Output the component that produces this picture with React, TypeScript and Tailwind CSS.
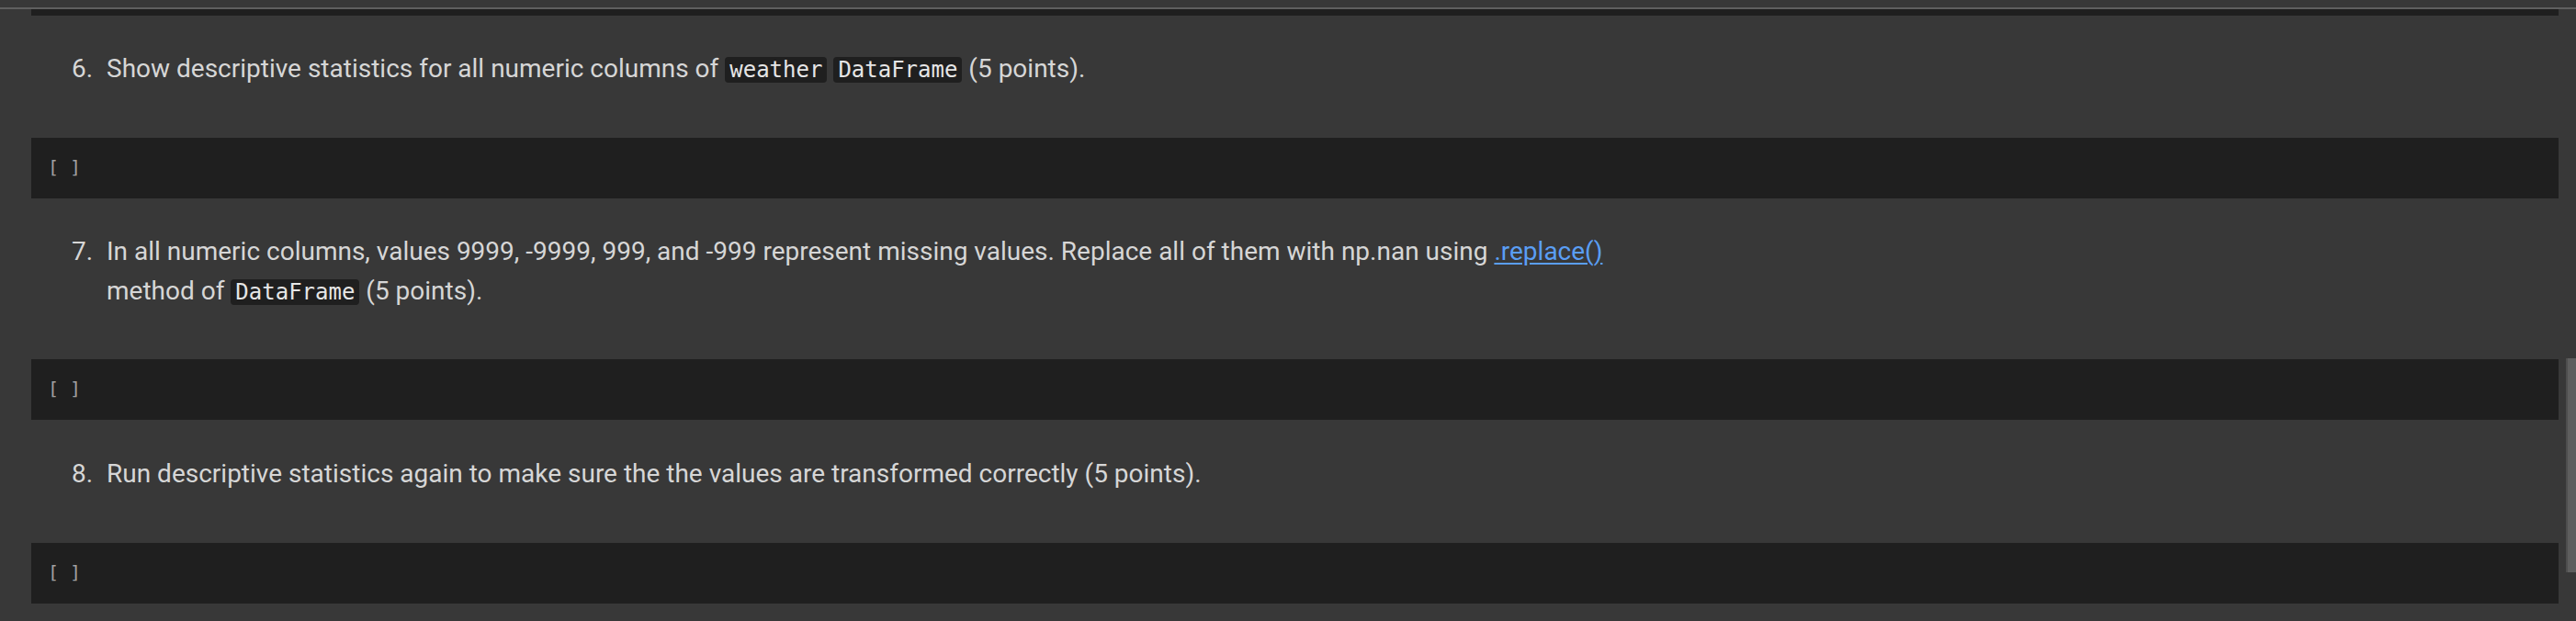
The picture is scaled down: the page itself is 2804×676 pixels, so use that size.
import React from 'react'

const Code: React.FC<{ children: React.ReactNode }> = ({ children }) => (
    <span className="bg-[#1f1f1f] text-[#e6e6e6] rounded-[4px] px-[5px] text-[24px] leading-none font-['DejaVu_Sans_Mono',monospace]">
        {children}
    </span>
)

const CodeCell: React.FC = () => (
    <div className="ml-[34px] mr-[19px] h-[66px] bg-[#1f1f1f] flex items-center pl-[18px] pb-[3px]">
        <span className="text-[20px] leading-none text-[#9f9f9f] font-['DejaVu_Sans_Mono',monospace] whitespace-pre">[ ]</span>
    </div>
)

interface MdProps {
    num: number
    children: React.ReactNode
    pt?: string
    pb?: string
}

const MdCell: React.FC<MdProps> = ({ num, children, pt = 'pt-[36px]', pb = 'pb-[54px]' }) => (
    <div className={`${pt} ${pb} pl-[78px] pr-[40px] flex text-[28px] leading-[43px] text-[#d6d6d6]`}>
        <span className="w-[38px] shrink-0">{num}.</span>
        <div className="max-w-[1800px]">{children}</div>
    </div>
)

export default function App() {
    return (
        <div className="relative w-[2804px] h-[676px] overflow-hidden bg-[#383838] font-['Roboto',sans-serif]">
            <div className="h-[8px]" />
            <div className="h-[2px] bg-[#5f5f5f]" />
            <div className="ml-[34px] mr-[19px] h-[7px] bg-[#1f1f1f]" />

            <MdCell num={6}>
                Show descriptive statistics for all numeric columns of <Code>weather</Code> <Code>DataFrame</Code> (5 points).
            </MdCell>
            <CodeCell />

            <MdCell num={7} pb="pb-[53px]">
                In all numeric columns, values 9999, -9999, 999, and -999 represent missing values. Replace all of them with np.nan using{' '}
                <a href="#" className="text-[#5a9ef4] underline underline-offset-[3px]">.replace()</a>
                <br />
                method of <Code>DataFrame</Code> (5 points).
            </MdCell>
            <CodeCell />

            <MdCell num={8} pt="pt-[37px]">
                Run descriptive statistics again to make sure the the values are transformed correctly (5 points).
            </MdCell>
            <CodeCell />

            {/* scrollbar */}
            <div className="absolute right-0 top-[390px] w-[11px] h-[233px] bg-[#5e5e5e] border-l-[2px] border-[#4e4e4e]" />
        </div>
    )
}
